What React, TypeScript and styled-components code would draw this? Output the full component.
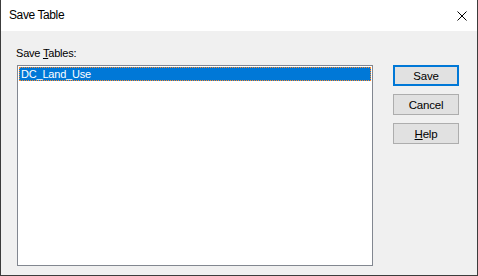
import React from 'react';
import styled, { createGlobalStyle } from 'styled-components';

const Global = createGlobalStyle`
  html, body {
    margin: 0;
    padding: 0;
    background: #f0f0f0;
  }
  body {
    font-family: "Liberation Sans", Arial, sans-serif;
    font-size: 11px;
    letter-spacing: -0.2px;
  }
`;

const Window = styled.div`
  width: 478px;
  height: 276px;
  box-sizing: border-box;
  border: 1px solid #3c3c3c;
  border-top: none;
  background: #f0f0f0;
  display: flex;
  flex-direction: column;
`;

const TitleBar = styled.div`
  height: 31px;
  background: #fff;
  display: flex;
  align-items: flex-start;
  justify-content: space-between;
  padding: 8px 0 0 8px;
  box-sizing: border-box;
`;

const Title = styled.div`
  font-size: 12px;
  letter-spacing: -0.4px;
  line-height: 15px;
  color: #000;
`;

const Close = styled.div`
  width: 30px;
  height: 22px;
  display: flex;
  align-items: center;
  justify-content: center;
  margin-top: -3px;
`;

const Body = styled.div`
  flex: 1;
  display: flex;
  padding: 15px 19px 9px 15px;
  gap: 20px;
`;

const Left = styled.div`
  display: flex;
  flex-direction: column;
  gap: 4px;
`;

const Label = styled.div`
  line-height: 15px;
  color: #000;
`;

const ListBox = styled.div`
  margin-left: 1px;
  width: 356px;
  height: 201px;
  box-sizing: border-box;
  border: 1px solid #828790;
  background: #fff;
  padding: 1px;
`;

const Item = styled.div<{ $selected?: boolean }>`
  height: 14px;
  line-height: 12px;
  box-sizing: border-box;
  padding-left: 1px;
  color: ${p => (p.$selected ? '#fff' : '#000')};
  background: ${p => (p.$selected ? '#0078d7' : 'transparent')};
  border: 1px dotted ${p => (p.$selected ? '#ff8a2a' : 'transparent')};
`;

const Buttons = styled.div`
  display: flex;
  flex-direction: column;
  gap: 8px;
  padding-top: 19px;
`;

const Button = styled.button<{ $default?: boolean }>`
  width: 66px;
  height: 21px;
  box-sizing: border-box;
  padding: 0;
  font-family: inherit;
  font-size: 11.5px;
  letter-spacing: -0.2px;
  color: #000;
  background: #e1e1e1;
  border: ${p => (p.$default ? '2px solid #0078d7' : '1px solid #adadad')};
`;

export default function App() {
  return (
    <>
      <Global />
      <Window>
        <TitleBar>
          <Title>Save Table</Title>
          <Close>
            <svg width="10" height="10" viewBox="0 0 10 10">
              <path d="M0.5 0.5 L9.5 9.5 M9.5 0.5 L0.5 9.5" stroke="#000" strokeWidth="1" fill="none" />
            </svg>
          </Close>
        </TitleBar>
        <Body>
          <Left>
            <Label>
              Save <u>T</u>ables:
            </Label>
            <ListBox>
              <Item $selected>DC_Land_Use</Item>
            </ListBox>
          </Left>
          <Buttons>
            <Button $default>Save</Button>
            <Button>Cancel</Button>
            <Button>
              <u>H</u>elp
            </Button>
          </Buttons>
        </Body>
      </Window>
    </>
  );
}
